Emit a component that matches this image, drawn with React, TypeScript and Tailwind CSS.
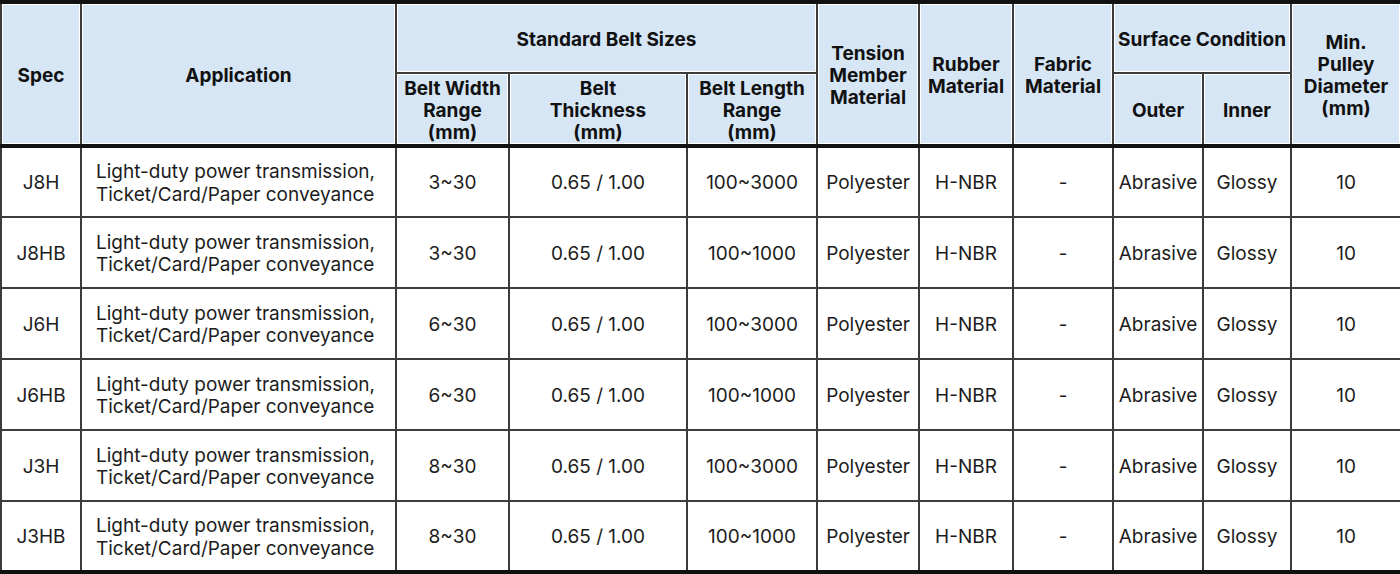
import React from 'react'

const rows = [
	{ spec: 'J8H', width: '3~30', length: '100~3000' },
	{ spec: 'J8HB', width: '3~30', length: '100~1000' },
	{ spec: 'J6H', width: '6~30', length: '100~3000' },
	{ spec: 'J6HB', width: '6~30', length: '100~1000' },
	{ spec: 'J3H', width: '8~30', length: '100~3000' },
	{ spec: 'J3HB', width: '8~30', length: '100~1000' },
]

const widths = [80, 315, 113, 178, 130, 102, 94, 100, 90, 88, 110]

const th =
	'border-2 border-[#3c3c3c] bg-[#d6e6f5] shadow-[inset_1px_1px_0_#fff,inset_-1px_-1px_0_#fff] px-0.5 pt-[4px] text-center align-middle text-[19px] font-bold leading-[22px] text-[#111]'
const td =
	'border-2 border-[#3c3c3c] px-1 pt-[3px] text-center align-middle text-[19px] leading-[22.5px] text-[#1c1c1c]'

export default function App() {
	return (
		<div className="h-[574px] w-[1400px] bg-white font-['Inter',sans-serif]">
			<table className="w-[1400px] table-fixed border-collapse border-t-[4px] border-b-[4px] border-t-[#111] border-b-[#111]">
				<colgroup>
					{widths.map((w, i) => (
						<col key={i} style={{ width: w }} />
					))}
				</colgroup>
				<thead>
					<tr className="h-[71px]">
						<th rowSpan={2} className={th}>Spec</th>
						<th rowSpan={2} className={th}>Application</th>
						<th colSpan={3} className={th}>Standard Belt Sizes</th>
						<th rowSpan={2} className={th}>
							Tension
							<br />
							Member
							<br />
							Material
						</th>
						<th rowSpan={2} className={th}>
							Rubber
							<br />
							Material
						</th>
						<th rowSpan={2} className={th}>
							Fabric
							<br />
							Material
						</th>
						<th colSpan={2} className={th}>Surface Condition</th>
						<th rowSpan={2} className={th}>
							Min.
							<br />
							Pulley
							<br />
							Diameter
							<br />
							(mm)
						</th>
					</tr>
					<tr className="h-[73px] border-b-[4px] border-b-[#111]">
						<th className={th}>
							Belt Width
							<br />
							Range
							<br />
							(mm)
						</th>
						<th className={th}>
							Belt
							<br />
							Thickness
							<br />
							(mm)
						</th>
						<th className={th}>
							Belt Length
							<br />
							Range
							<br />
							(mm)
						</th>
						<th className={th}>Outer</th>
						<th className={th}>Inner</th>
					</tr>
				</thead>
				<tbody>
					{rows.map((r) => (
						<tr key={r.spec} className="h-[71px]">
							<td className={td}>{r.spec}</td>
							<td className={`${td} px-[14px] text-left`}>
								Light-duty power transmission,
								<br />
								Ticket/Card/Paper conveyance
							</td>
							<td className={td}>{r.width}</td>
							<td className={td}>0.65 / 1.00</td>
							<td className={td}>{r.length}</td>
							<td className={td}>Polyester</td>
							<td className={td}>H-NBR</td>
							<td className={td}>-</td>
							<td className={td}>Abrasive</td>
							<td className={td}>Glossy</td>
							<td className={td}>10</td>
						</tr>
					))}
				</tbody>
			</table>
		</div>
	)
}
